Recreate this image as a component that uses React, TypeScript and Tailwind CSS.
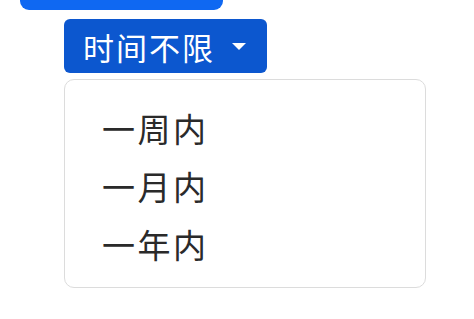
import React from "react";

export default function App() {
  const items = ["一周内", "一月内", "一年内"];
  return (
    <div
      className="relative h-[319px] w-[474px] overflow-hidden bg-white"
      style={{ fontFamily: '"Noto Sans CJK SC", "Noto Sans", sans-serif' }}
    >
      <div className="ml-[20px] h-[10px] w-[203px] rounded-b-[9px] bg-[#0f68f2]" />
      <button className="ml-[64px] mt-[9px] flex h-[54px] w-[203px] items-center rounded-[6px] bg-[#0c57cf] pl-[19px] text-[31px] leading-none tracking-[2px] text-white">
        <span>时间不限</span>
        <span className="ml-[17px] h-0 w-0 border-x-[7.5px] border-t-[7px] border-x-transparent border-t-white" />
      </button>
      <div className="ml-[64px] mt-[6px] flex h-[209px] w-[362px] flex-col rounded-[10px] border border-[#dcdcdc] pt-[19px]">
        {items.map((t) => (
          <div
            key={t}
            className="flex h-[58px] items-center pl-[37px] text-[33px] leading-none tracking-[2.5px] text-[#2a2a2a]"
          >
            {t}
          </div>
        ))}
      </div>
    </div>
  );
}
